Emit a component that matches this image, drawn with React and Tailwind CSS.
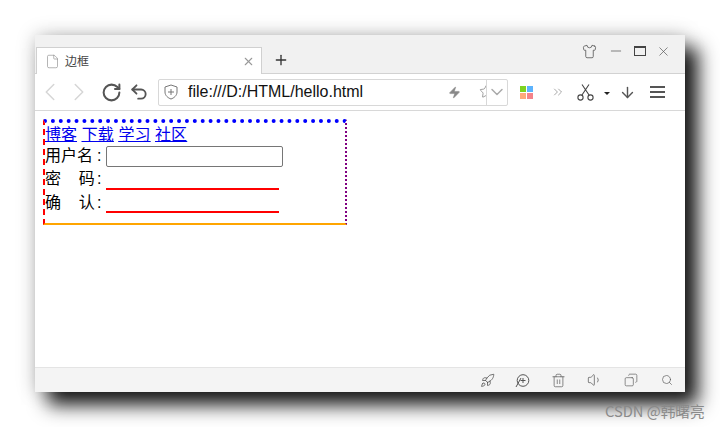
import React from "react";
import { ChevronLeft, ChevronRight, RotateCw, Undo2, ChevronDown, Zap, ChevronsRight, ArrowDown, Shirt, Minus, X, Plus, File, Rocket, Trash2, Volume1, Search, Copy, Star } from "lucide-react";

const sans = { fontFamily: '"Noto Sans CJK SC", sans-serif' };

const Field = ({ label, labelClass, className, children }) => (
  <div className={`flex text-[16px] leading-5 text-black ${className}`}>
    <span className={`flex w-[61px] items-center whitespace-pre ${labelClass}`}>
      <span className="w-[52px]">{label}</span>
      <span>:</span>
    </span>
    {children}
  </div>
);

const App = () => {
  return (
    <div className="relative h-[427px] w-[720px] overflow-hidden bg-white pl-[35px] pt-[35px] font-['Liberation_Sans','Noto_Sans_CJK_SC',sans-serif]">
      <div className="flex h-[357px] w-[650px] flex-col bg-white shadow-[13px_13px_18px_rgba(0,0,0,0.9),0_0_18px_rgba(0,0,0,0.22)]">
        {/* title bar */}
        <div className="flex h-[39px] items-end justify-between border-b border-[#d2d2d2] bg-[#f1f1f1]">
          <div className="flex items-end">
            <div className="-mb-px ml-px flex h-[27px] w-[226px] items-center border border-b-0 border-[#d0d0d0] bg-white pl-[8px] pr-[6px]">
              <File size={15} strokeWidth={1} className="text-[#888]" />
              <span className="ml-[5px] flex-1 text-[12px] text-[#444]" style={sans}>边框</span>
              <X size={13} className="text-[#999]" />
            </div>
            <Plus size={16} strokeWidth={2} className="mb-[5px] ml-[11px] text-[#333]" />
          </div>
          <div className="mb-[14px] mr-[14px] flex items-center text-[#555]">
            <Shirt size={15} strokeWidth={1.3} />
            <Minus size={16} strokeWidth={1.1} className="ml-[11px]" />
            <div className="ml-[10px] h-[10px] w-[12px] border border-t-2 border-[#444]" />
            <X size={15} strokeWidth={1.1} className="ml-[10px]" />
          </div>
        </div>

        {/* toolbar */}
        <div className="flex h-[37px] items-center border-b border-[#d8d8d8]">
          <ChevronLeft size={30} strokeWidth={1.2} className="text-[#d6d6d6]" />
          <ChevronRight size={30} strokeWidth={1.2} className="-ml-px text-[#d6d6d6]" />
          <RotateCw size={21} strokeWidth={2.3} className="ml-[7px] text-[#555]" />
          <Undo2 size={20} strokeWidth={2.2} className="ml-[7px] text-[#555]" />
          <div className="ml-[9px] flex h-[27px] w-[350px] items-center rounded-[2px] border border-[#d8d8d8]">
            <svg width="14" height="16" viewBox="0 0 14 16" fill="none" stroke="#777" className="ml-[5px]">
              <path d="M7 1 L13 3 V8 C13 11.5 10 14 7 15 C4 14 1 11.5 1 8 V3 Z" />
              <path d="M7 5 V11 M4 8 H10" />
            </svg>
            <span className="ml-[10px] flex-1 text-[16px] text-[#111]">file:///D:/HTML/hello.html</span>
            <Zap size={13} fill="#888" strokeWidth={1} className="mr-[18px] text-[#888]" />
            <div className="h-[16px] w-[7px] overflow-hidden">
              <Star size={15} strokeWidth={1} className="text-[#666]" />
            </div>
            <div className="flex h-[25px] w-[21px] items-center justify-center border-l border-[#d8d8d8]">
              <ChevronDown size={20} strokeWidth={1.8} className="text-[#aaa]" />
            </div>
          </div>
          <div className="ml-[12px] grid h-[13px] w-[13px] grid-cols-2 gap-px">
            <div className="bg-[#7ed321]" />
            <div className="bg-[#5cb3fd]" />
            <div className="bg-[#ffaa7b]" />
            <div className="bg-[#f4838a]" />
          </div>
          <ChevronsRight size={14} strokeWidth={1.1} className="ml-[18px] text-[#777]" />
          <svg width="17" height="17" viewBox="0 0 17 17" fill="none" stroke="#444" strokeWidth="1.1" className="ml-[12px]">
            <circle cx="3.5" cy="13.5" r="2.6" />
            <circle cx="13.5" cy="13.5" r="2.6" />
            <path d="M4.8 11.2 L12 0.5 M12.2 11.2 L5 0.5" />
          </svg>
          <div className="ml-[10px] mt-[2px] h-0 w-0 border-x-[3px] border-t-[3px] border-x-transparent border-t-[#222]" />
          <ArrowDown size={17} strokeWidth={2} className="ml-[9px] text-[#555]" />
          <div className="ml-[14px] flex w-[15px] flex-col gap-[3px]">
            <div className="h-[2px] bg-[#555]" />
            <div className="h-[2px] bg-[#555]" />
            <div className="h-[2px] bg-[#555]" />
          </div>
        </div>

        {/* page */}
        <div className="flex-1 pl-[8px] pt-[8px]">
          <div className="box-border h-[106px] w-[304px] border-t-4 border-r-2 border-b-2 border-l-2 border-t-[#0000ff] border-r-[#800080] border-b-[#ffa500] border-l-[#ff0000] [border-style:dotted_dotted_solid_dashed]">
            <div className="flex h-[22px] items-center gap-[4.7px] pt-[2px] text-[16px] leading-5 text-[#0000ee] underline">
              <a href="#">博客</a>
              <a href="#">下载</a>
              <a href="#">学习</a>
              <a href="#">社区</a>
            </div>
            <Field label="用户名" labelClass="h-[22px]" className="h-[22px] items-center">
              <input type="text" className="h-[21px] w-[177px] rounded-[2px] border border-[#767676] bg-white" />
            </Field>
            <Field label="密    码" labelClass="h-[23px]" className="h-[23px]">
              <input type="password" className="h-[23px] w-[173px] border-b-2 border-[#ff0000] bg-white" />
            </Field>
            <Field label="确    认" labelClass="h-[25px]" className="h-[23px]">
              <input type="password" className="h-[23px] w-[173px] border-b-2 border-[#ff0000] bg-white" />
            </Field>
          </div>
        </div>

        {/* status bar */}
        <div className="flex h-[25px] items-center justify-end gap-[21px] border-t border-[#e4e4e4] bg-[#f4f4f4] pr-[12px] text-[#555]">
          <Rocket size={15} strokeWidth={1.3} className="-mr-px" />
          <svg width="15" height="15" viewBox="0 0 15 15" fill="none" stroke="#555">
            <circle cx="8" cy="7.5" r="5.8" />
            <path d="M8 5 V10 M5.5 7.5 H10.5 M1 14 L6 5" />
          </svg>
          <Trash2 size={15} strokeWidth={1.1} />
          <Volume1 size={16} strokeWidth={1.1} />
          <Copy size={14} strokeWidth={1.1} className="-scale-x-100" />
          <Search size={12} strokeWidth={1.3} className="ml-[2px]" />
        </div>
      </div>
      <span className="absolute left-[605px] top-[402px] text-[14.7px] leading-[18px] text-[#8a8a8a]" style={sans}>CSDN @韩曙亮</span>
    </div>
  );
};

export default App;
